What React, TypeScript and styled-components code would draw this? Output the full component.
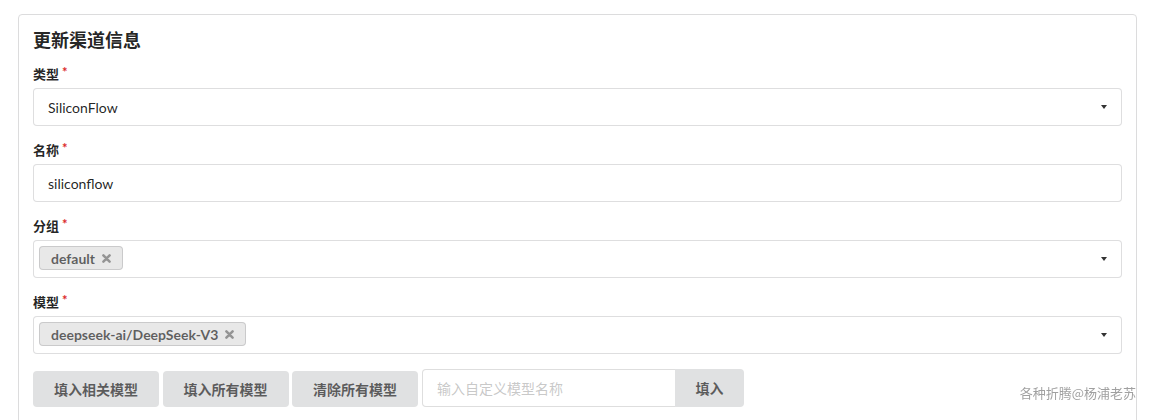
import React from 'react';
import styled, {createGlobalStyle} from "styled-components";

const GlobalStyle = createGlobalStyle`
  html, body {
    margin: 0;
    padding: 0;
    background: #ffffff;
  }
  body {
    font-family: Lato, "Helvetica Neue", Arial, "Noto Sans CJK SC", sans-serif;
    font-size: 14px;
    color: rgba(0, 0, 0, .87);
    overflow: hidden;
  }
`

type FieldPropsType = {
    label: string
    children: React.ReactNode
}

const Field = (props: FieldPropsType) => (
    <StyledField>
        <Label>{props.label}</Label>
        {props.children}
    </StyledField>
)

const DeleteIcon = () => (
    <svg width="9" height="9" viewBox="0 0 9 9">
        <path d="M1.4 1.4 L7.6 7.6 M7.6 1.4 L1.4 7.6" stroke="currentColor" strokeWidth="2.5" strokeLinecap="round"/>
    </svg>
)

type ChipPropsType = {
    text: string
}

const Chip = (props: ChipPropsType) => (
    <StyledChip>
        {props.text}
        <ChipDelete><DeleteIcon/></ChipDelete>
    </StyledChip>
)

export default function App() {
    return (
        <>
            <GlobalStyle/>
            <Page>
                <Card>
                    <Header>更新渠道信息</Header>
                    <Field label="类型">
                        <Dropdown>
                            <DropdownText>SiliconFlow</DropdownText>
                            <Caret/>
                        </Dropdown>
                    </Field>
                    <Field label="名称">
                        <TextInput defaultValue="siliconflow"/>
                    </Field>
                    <Field label="分组">
                        <Dropdown multiple>
                            <Chip text="default"/>
                            <Caret/>
                        </Dropdown>
                    </Field>
                    <Field label="模型">
                        <Dropdown multiple>
                            <Chip text="deepseek-ai/DeepSeek-V3"/>
                            <Caret/>
                        </Dropdown>
                    </Field>
                    <ButtonRow>
                        <Button>填入相关模型</Button>
                        <Button>填入所有模型</Button>
                        <Button>清除所有模型</Button>
                        <ActionInput>
                            <CustomInput placeholder="输入自定义模型名称"/>
                            <ActionButton>填入</ActionButton>
                        </ActionInput>
                    </ButtonRow>
                </Card>
            </Page>
            <Watermark>各种折腾@杨浦老苏</Watermark>
        </>
    );
}

const Page = styled.div`
  padding: 14px 20px 0 18px;
`

const Card = styled.div`
  width: 1119px;
  box-sizing: border-box;
  border: 1px solid #dcdcdd;
  border-radius: 4px;
  padding: 14px 14px 60px 14px;
  background: #ffffff;
`

const Header = styled.div`
  font-size: 18px;
  font-weight: 700;
  line-height: 23px;
  margin-bottom: 12px;
  color: rgba(0, 0, 0, .87);
`

const StyledField = styled.div`
  margin-bottom: 14px;
`

const Label = styled.label`
  display: block;
  font-size: 13px;
  font-weight: 700;
  line-height: 20px;
  margin-bottom: 4px;
  color: rgba(0, 0, 0, .87);

  &::after {
    content: '*';
    display: inline-block;
    vertical-align: top;
    margin: -2px 0 0 3px;
    color: #db2828;
  }
`

const Dropdown = styled.div<{ multiple?: boolean }>`
  display: flex;
  align-items: center;
  height: 38px;
  box-sizing: border-box;
  border: 1px solid rgba(34, 36, 38, .15);
  border-radius: 4px;
  padding: 0 14px 0 ${props => props.multiple ? '5px' : '14px'};
  background: #ffffff;
`

const DropdownText = styled.div`
  flex: 1;
  font-size: 14px;
  color: rgba(0, 0, 0, .87);
`

const Caret = styled.span`
  margin-left: auto;
  width: 0;
  height: 0;
  border-left: 3.5px solid transparent;
  border-right: 3.5px solid transparent;
  border-top: 4px solid rgba(0, 0, 0, .8);
`

const TextInput = styled.input`
  display: block;
  width: 100%;
  height: 38px;
  box-sizing: border-box;
  border: 1px solid rgba(34, 36, 38, .15);
  border-radius: 4px;
  padding: 0 14px;
  font-family: inherit;
  font-size: 14px;
  color: rgba(0, 0, 0, .87);
  outline: none;
`

const StyledChip = styled.div`
  display: inline-flex;
  align-items: center;
  align-self: flex-start;
  margin-top: 5px;
  height: 24px;
  box-sizing: border-box;
  padding: 0 11px;
  background: #e8e8e8;
  border: 1px solid rgba(34, 36, 38, .15);
  border-radius: 4px;
  font-size: 14px;
  font-weight: 700;
  color: rgba(0, 0, 0, .6);
`

const ChipDelete = styled.span`
  display: inline-flex;
  margin-left: 7px;
  color: rgba(0, 0, 0, .6);
  opacity: .6;
`

const ButtonRow = styled.div`
  display: flex;
  align-items: baseline;
  margin-top: 16px;
`

const Button = styled.button`
  height: 36px;
  padding: 0 21px;
  margin-right: 3.5px;
  border: none;
  border-radius: 4px;
  background: #e0e1e2;
  font-family: inherit;
  font-size: 14px;
  font-weight: 700;
  color: rgba(0, 0, 0, .6);
  cursor: pointer;
`

const ActionInput = styled.div`
  display: inline-flex;
  height: 38px;
  margin-left: 0.5px;
  transform: translateY(-1px);
`

const CustomInput = styled.input`
  width: 253px;
  box-sizing: border-box;
  border: 1px solid rgba(34, 36, 38, .15);
  border-right: none;
  border-radius: 4px 0 0 4px;
  padding: 0 14px;
  font-family: inherit;
  font-size: 14px;
  color: rgba(0, 0, 0, .87);
  outline: none;

  &::placeholder {
    color: rgba(191, 191, 191, .87);
  }
`

const ActionButton = styled.button`
  width: 69px;
  border: none;
  border-radius: 0 4px 4px 0;
  background: #e0e1e2;
  font-family: inherit;
  font-size: 14px;
  font-weight: 700;
  color: rgba(0, 0, 0, .6);
`

const Watermark = styled.div`
  position: fixed;
  right: 21px;
  top: 383px;
  font-size: 13px;
  color: rgba(120, 120, 120, .7);
  font-family: "Noto Sans CJK SC", sans-serif;
  pointer-events: none;
`
